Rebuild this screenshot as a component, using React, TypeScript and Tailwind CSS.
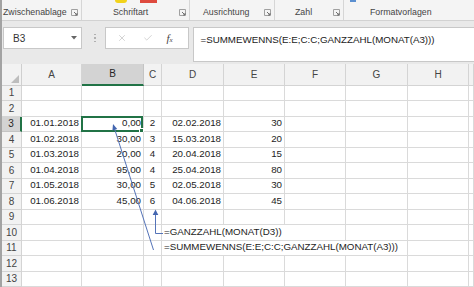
import { X, Check } from 'lucide-react';

const cols = ['A', 'B', 'C', 'D', 'E', 'F', 'G', 'H', 'I'];

// cell values for rows 3..8 (columns A..E)
const data: Record<number, string[]> = {
  3: ['01.01.2018', '0,00', '2', '02.02.2018', '30'],
  4: ['01.02.2018', '30,00', '3', '15.03.2018', '20'],
  5: ['01.03.2018', '20,00', '4', '20.04.2018', '15'],
  6: ['01.04.2018', '95,00', '4', '25.04.2018', '80'],
  7: ['01.05.2018', '30,00', '5', '02.05.2018', '30'],
  8: ['01.06.2018', '45,00', '6', '04.06.2018', '45'],
};

// text that overflows from column D into the next cells
const overflow: Record<number, { text: string; hide: string[] }> = {
  10: { text: '=GANZZAHL(MONAT(D3))', hide: ['D', 'E'] },
  11: { text: '=SUMMEWENNS(E:E;C:C;GANZZAHL(MONAT(A3)))', hide: ['D', 'E', 'F'] },
};

const align: Record<string, string> = {
  A: 'justify-end pr-[2px]',
  B: 'justify-end pr-[2px]',
  C: 'justify-center',
  D: 'justify-end pr-[2px]',
  E: 'justify-end pr-[2px]',
};

function Launcher() {
  return (
    <svg width="7" height="7" viewBox="0 0 7 7" className="shrink-0">
      <path d="M0.5 0.5h6v6h-6z" fill="none" stroke="#a0a0a0" strokeWidth="1" />
      <path d="M3 3l3 3M4 6h2V4" fill="none" stroke="#707070" strokeWidth="1" />
    </svg>
  );
}

function RibbonGroup({
  label,
  width,
  pl,
  children,
}: {
  label: string;
  width: string;
  pl: string;
  children?: React.ReactNode;
}) {
  return (
    <div className={`flex flex-col border-r border-[#d6d6d6] ${width}`}>
      <div className="flex h-[5px] items-start">{children}</div>
      <div className={`flex h-[16px] items-center justify-between pr-[3px] ${pl}`}>
        <span className="text-[8.8px] text-[#444]">{label}</span>
        <Launcher />
      </div>
    </div>
  );
}

export default function App() {
  const rows = Array.from({ length: 13 }, (_, i) => i + 1);

  return (
    <div className="relative flex h-[287px] w-[474px] overflow-hidden bg-[#e9e9e9] font-['Liberation_Sans',Arial,sans-serif]">
      <div className="w-[2px] shrink-0 bg-[#a3a3a3]" />
      <div className="flex w-[472px] flex-col">
        {/* Ribbon group labels */}
        <div className="flex h-[21px] border-b border-[#d2d2d2] bg-[#f4f4f4]">
          <RibbonGroup label="Zwischenablage" width="w-[80px]" pl="pl-[1px]" />
          <RibbonGroup label="Schriftart" width="w-[108px]" pl="pl-[31px]">
            <span className="ml-[33px] h-[3px] w-[12px] rounded-b-sm bg-[#f2d31b]" />
            <span className="ml-[13px] h-[3px] w-[17px] bg-[#de4a3e]" />
          </RibbonGroup>
          <RibbonGroup label="Ausrichtung" width="w-[85px]" pl="pl-[13px]" />
          <RibbonGroup label="Zahl" width="w-[69px]" pl="pl-[20px]" />
          <div className="flex flex-1 flex-col">
            <div className="flex h-[5px] items-start">
              <span className="ml-[6px] h-[2px] w-[6px] bg-[#5b8fd0]" />
            </div>
            <div className="flex h-[16px] items-center pl-[26px]">
              <span className="text-[8.8px] text-[#444]">Formatvorlagen</span>
            </div>
          </div>
        </div>

        {/* Formula bar */}
        <div className="flex h-[43px] items-start pt-[6px]">
          <div className="ml-[1px] flex h-[22px] w-[79px] items-center justify-between border border-[#c8c8c8] bg-white pl-[9px] pr-[4px]">
            <span className="text-[10px] text-[#333]">B3</span>
            <svg width="6" height="4" viewBox="0 0 6 4">
              <path d="M0 0h6L3 3.5z" fill="#666" />
            </svg>
          </div>
          <div className="ml-[12px] flex h-[22px] flex-col items-center justify-center gap-[2px]">
            <span className="h-[1.5px] w-[1.5px] bg-[#b0b0b0]" />
            <span className="h-[1.5px] w-[1.5px] bg-[#b0b0b0]" />
            <span className="h-[1.5px] w-[1.5px] bg-[#b0b0b0]" />
          </div>
          <div className="ml-[9px] flex h-[22px] w-[84px] items-center border border-[#c8c8c8] bg-white pl-[11px]">
            <X size={10} strokeWidth={1.4} color="#b4b4b4" />
            <Check size={10} strokeWidth={1.4} color="#b4b4b4" className="ml-[16px]" />
            <span className="ml-[14px] font-['Liberation_Serif',serif] text-[11px] italic text-[#444]">
              f<span className="text-[7px]">x</span>
            </span>
          </div>
          <div className="ml-[4px] flex h-[35px] flex-1 items-start border border-r-0 border-[#c8c8c8] bg-white pl-[7px] pt-[5px]">
            <span className="whitespace-nowrap text-[9.75px] text-[#222]">
              =SUMMEWENNS(E:E;C:C;GANZZAHL(MONAT(A3)))
            </span>
          </div>
        </div>

        {/* Sheet grid */}
        <div className="grid grid-cols-[20px_60px_62px_18px_62px_61px_61px_62px_61px_1fr] bg-white text-[9.75px] text-[#1d1d1d]">
          {/* header row */}
          <div className="relative h-[22px] border-r border-b border-[#cfcfcf] bg-[#f2f2f2]">
            <svg width="8" height="8" viewBox="0 0 8 8" className="absolute bottom-[2px] right-[2px]">
              <path d="M8 0v8H0z" fill="#bdbdbd" />
            </svg>
          </div>
          {cols.map((c) => (
            <div
              key={c}
              className={`flex h-[22px] items-end justify-center pb-[3px] text-[10px] ${
                c === 'B'
                  ? 'border-r border-b-2 border-r-[#c4c4c4] border-b-[#217346] bg-[#d3d3d3] text-[#262626]'
                  : 'border-r border-b border-[#d4d4d4] bg-[#f2f2f2] text-[#444]'
              }`}
            >
              {c !== 'I' && c}
            </div>
          ))}

          {rows.map((r) => (
            <div key={r} className="contents">
              <div
                className={`flex h-[15.5px] items-center justify-center text-[10px] ${
                  r === 3
                    ? 'border-r-2 border-b border-r-[#217346] border-b-[#c4c4c4] bg-[#d3d3d3] text-[#262626]'
                    : 'border-r border-b border-[#d4d4d4] bg-[#f2f2f2] text-[#444]'
                }`}
              >
                {r}
              </div>
              {cols.map((c, ci) => {
                const ov = overflow[r];
                const hide = ov?.hide.includes(c);
                const value = data[r]?.[ci];
                return (
                  <div
                    key={c}
                    className={`relative flex h-[15.5px] items-center border-b border-[#dadada] ${
                      hide ? '' : 'border-r'
                    } ${ov && c === 'D' ? 'overflow-visible pl-[2px]' : align[c] ?? ''}`}
                  >
                    {ov && c === 'D' ? (
                      <span className="relative z-10 whitespace-nowrap">{ov.text}</span>
                    ) : (
                      value && <span>{value}</span>
                    )}
                    {r === 3 && c === 'B' && (
                      <div className="pointer-events-none absolute -left-[1px] -top-[1px] bottom-[-1px] right-0 border-2 border-[#217346]">
                        <span className="absolute -bottom-[3px] -right-[3px] h-[5px] w-[5px] border border-white bg-[#217346]" />
                      </div>
                    )}
                  </div>
                );
              })}
            </div>
          ))}
        </div>
      </div>

      {/* Precedent tracer arrows */}
      <svg
        className="pointer-events-none absolute left-0 top-0"
        width="474"
        height="287"
        viewBox="0 0 474 287"
      >
        <line x1="153.5" y1="250" x2="114.6" y2="129" stroke="#5473b8" strokeWidth="1" />
        <path d="M113 124 L117.2 129 L112.4 130.5 Z" fill="#4466b0" />
        <polyline points="163,233.5 155.5,233.5 155.5,214" fill="none" stroke="#5473b8" strokeWidth="1" />
        <path d="M155.5 209.5 L158.3 215 L152.7 215 Z" fill="#4466b0" />
      </svg>
    </div>
  );
}
